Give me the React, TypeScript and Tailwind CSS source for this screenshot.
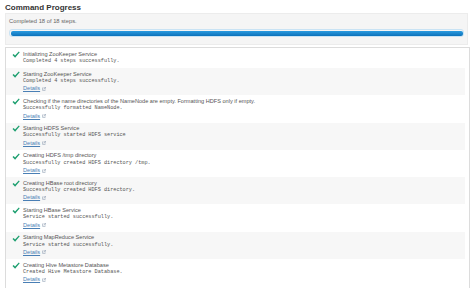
import React from 'react';

interface Step {
  title: string;
  message: string;
  details: boolean;
}

const steps: Step[] = [
  { title: 'Initializing ZooKeeper Service', message: 'Completed 4 steps successfully.', details: false },
  { title: 'Starting ZooKeeper Service', message: 'Completed 4 steps successfully.', details: true },
  { title: 'Checking if the name directories of the NameNode are empty. Formatting HDFS only if empty.', message: 'Successfully formatted NameNode.', details: true },
  { title: 'Starting HDFS Service', message: 'Successfully started HDFS service', details: true },
  { title: 'Creating HDFS /tmp directory', message: 'Successfully created HDFS directory /tmp.', details: true },
  { title: 'Creating HBase root directory', message: 'Successfully created HDFS directory.', details: true },
  { title: 'Starting HBase Service', message: 'Service started successfully.', details: true },
  { title: 'Starting MapReduce Service', message: 'Service started successfully.', details: true },
  { title: 'Creating Hive Metastore Database', message: 'Created Hive Metastore Database.', details: true },
];

function Check() {
  return (
    <svg className="w-[8px] h-[7px]" viewBox="0 0 16 14">
      <path d="M1 8.2 L3.4 6.2 L6 9 L13.6 0.8 L15.4 2.4 L6.2 13.4 Z" fill="#1c9f6f" />
    </svg>
  );
}

function ExternalIcon() {
  return (
    <svg className="w-[4px] h-[4px] ml-[1.5px]" viewBox="0 0 10 10" fill="none" stroke="#8a9bb0" strokeWidth={1.4}>
      <path d="M4 2H1.5v6.5H8V6" />
      <path d="M5.5 1H9v3.5M9 1L4.5 5.5" />
    </svg>
  );
}

export default function App() {
  return (
    <div className="w-[474px] h-[288px] overflow-hidden bg-white text-[#333] font-['Liberation_Sans',Arial,sans-serif]">
      <div className="pl-[5px] pr-[4px] pt-[3px]">
        <h2 className="text-[8px] leading-[9px] font-bold text-[#333]">Command Progress</h2>

        {/* Summary panel */}
        <div className="mt-[1px] mr-[2px] h-[32px] bg-[#f5f5f5] border border-[#ececec] px-[3px] pt-[4px]">
          <p className="text-[5.8px] leading-[7px] text-[#666]">Completed 18 of 18 steps.</p>
          <div className="mt-[4px] h-[8px] rounded-[3px] border border-[#c9e3f4] p-[0.5px]">
            <div className="h-full rounded-[2px] bg-gradient-to-b from-[#2a9be0] to-[#0a72ba]" />
          </div>
        </div>

        {/* Step list */}
        <div className="mt-[2px] border-t border-l border-r border-[#dcdcdc] pr-[4px] h-[260px] overflow-hidden">
          {steps.map((step, i) => (
            <div
              key={step.title}
              className={`flex items-start py-[2.7px] ${i % 2 === 1 ? 'bg-[#f7f7f7]' : 'bg-white'}`}
            >
              <div className="w-[17px] flex-shrink-0 flex justify-center pt-[0.3px] pl-[2px]">
                <Check />
              </div>
              <div className="flex-1 min-w-0">
                <p className="text-[5.6px] leading-[7.3px] text-[#555] whitespace-nowrap">{step.title}</p>
                <p className="text-[5.2px] leading-[7.3px] text-[#555] font-['Liberation_Mono',monospace] whitespace-nowrap">
                  {step.message}
                </p>
                {step.details && (
                  <div className="flex items-center h-[7.3px]">
                    <span className="text-[5.6px] leading-[7.3px] text-[#4a7fb5] underline">Details</span>
                    <ExternalIcon />
                  </div>
                )}
              </div>
            </div>
          ))}
        </div>
      </div>
    </div>
  );
}
